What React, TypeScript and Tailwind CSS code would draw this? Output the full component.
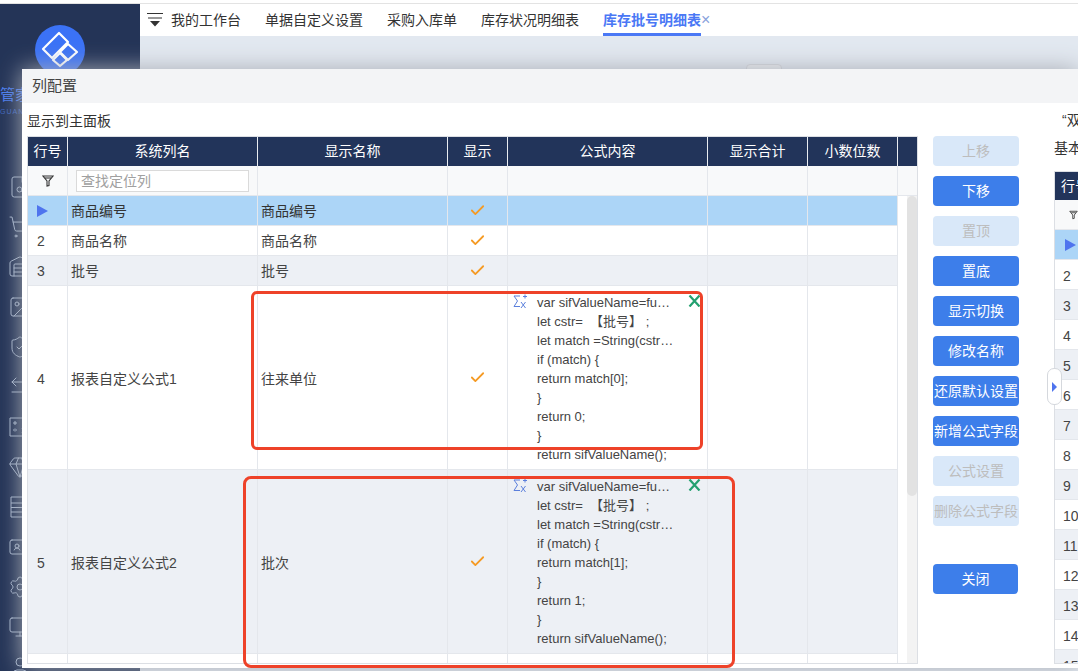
import { ArrowLeftRight, Check, FileSearch, Gem, IdCard, Image, Monitor, Settings, ShieldCheck, ShoppingCart, User, Warehouse } from 'lucide-react'

const FONT = 'font-["Liberation_Sans","Noto_Sans_CJK_SC",sans-serif]'

const TABS = ['单据自定义设置', '采购入库单', '库存状况明细表']
const COLUMNS = ['行号', '系统列名', '显示名称', '显示', '公式内容', '显示合计', '小数位数', '']
const GRID = 'grid grid-cols-[40px_190px_190px_60px_200px_100px_90px]'
const BUTTONS = [
  { label: '上移', off: true },
  { label: '下移' },
  { label: '置顶', off: true },
  { label: '置底' },
  { label: '显示切换' },
  { label: '修改名称' },
  { label: '还原默认设置' },
  { label: '新增公式字段' },
  { label: '公式设置', off: true },
  { label: '删除公式字段', off: true },
]

function CalcIcon() {
  return (
    <svg width="24" height="24" viewBox="0 0 24 24" fill="none" stroke="currentColor" strokeWidth="1">
      <path d="M2 3h20v18H2z" />
      <path d="M5 8h4M7 6v4M14 8h5M5 15h4M7 13v.5M7 16.500v.5M14 13.500l4 4M18 13.500l-4 4" />
    </svg>
  )
}

function ListIcon() {
  return (
    <svg width="24" height="24" viewBox="0 0 24 24" fill="none" stroke="currentColor" strokeWidth="1">
      <path d="M3 2h18v20H3z" />
      <path d="M3 8h18M3 12.500h18M3 17h18" />
    </svg>
  )
}

const SIDE_ICONS = [FileSearch, ShoppingCart, Warehouse, Image, ShieldCheck, ArrowLeftRight, CalcIcon, Gem, ListIcon, IdCard, Settings, Monitor, User]

// the cell shows these lines as the reference cuts them
function formula(n: number) {
  return [
    'var sifValueName=fu…',
    'let cstr=\u00a0\u00a0【批号】\u00a0;',
    'let match =String(cstr…',
    'if (match) {',
    `return match[${n}];`,
    '}',
    `return ${n};`,
    '}',
    'return sifValueName();',
  ]
}

function Arrow() {
  return <div className="h-0 w-0 border-y-[6px] border-l-[11px] border-y-transparent border-l-[#4f74ee]" />
}

function Funnel() {
  return (
    <svg width="12" height="12" viewBox="0 0 12 12" fill="none" stroke="#333" strokeWidth="1.1">
      <path d="M1 1h10L7 6v4.500L5 11V6z" />
      <path d="M3 3h6" />
    </svg>
  )
}

function Sigma() {
  return (
    <svg width="15" height="15" viewBox="0 0 15 15" fill="none" stroke="#5b7fdc" strokeWidth="1">
      <path d="M7 2H1l3.500 5L1 12.500h6" />
      <path d="M8 8l4.500 6M12.500 8L8 14" />
      <path d="M12 0.500v4M10 2.500h4" />
    </svg>
  )
}

function ExcelX() {
  return (
    <svg width="13" height="12" viewBox="0 0 13 12" fill="none" stroke="#23a06f" strokeWidth="2.2">
      <path d="M1.500 .5l10 11M11.500 .5l-10 11" />
    </svg>
  )
}

function Row({ no, name, label, shown, lines, tall, className }: { no: string; name: string; label: string; shown?: boolean; lines?: string[]; tall?: boolean; className: string }) {
  const text = tall ? 'pt-[4px]' : 'pt-[2px]'
  return (
    <div className={`${GRID} border-b border-[#e4e7ec] ${className}`}>
      <div className={`flex items-center border-r border-[#e4e7ec] pl-[9px] ${no === '1' ? '' : text}`}>{no === '1' ? <Arrow /> : no}</div>
      <div className={`flex items-center border-r border-[#e4e7ec] pl-[3px] ${text}`}>{name}</div>
      <div className={`flex items-center border-r border-[#e4e7ec] pl-[3px] ${text}`}>{label}</div>
      <div className="flex items-center justify-center border-r border-[#e4e7ec]">
        {shown && <Check size={17} strokeWidth={2.5} className="mr-[1px] text-[#f59a23]" />}
      </div>
      <div className="relative border-r border-[#e4e7ec]">
        {lines && (
          <div className="pl-[29px] pt-[7px] text-[13px] leading-[19px]">
            <div className="absolute left-[5px] top-[8px]">
              <Sigma />
            </div>
            <div className="absolute left-[180px] top-[9px]">
              <ExcelX />
            </div>
            {lines.map((line, i) => (
              <div key={i} className="whitespace-nowrap">{line}</div>
            ))}
          </div>
        )}
      </div>
      <div className="border-r border-[#e4e7ec]" />
      <div className="border-r border-[#e4e7ec]" />
    </div>
  )
}

export default function App() {
  return (
    <div className={`${FONT} relative flex h-[671px] w-[1078px] flex-col overflow-hidden bg-white text-[14px] text-[#444]`}>
      <div className="h-[4px] shrink-0 border-b border-[#e3e3e3] bg-white" />
      <div className="flex min-h-0 flex-1">
        {/* sidebar */}
        <div className="flex w-[140px] shrink-0 flex-col overflow-hidden bg-[#243457]">
          <div className="ml-[35px] mt-[21px] h-[50px] w-[50px] shrink-0 rounded-full bg-[#3b72f6]">
            <svg width="50" height="50" viewBox="0 0 50 50" fill="none" stroke="white" strokeWidth="2.2" strokeLinejoin="round">
              <path d="M24 8L8 24l9 9 16-16z" />
              <path d="M33 19l9 8-9 8-8-8z" />
              <path d="M25 28l7 7-7 6-7-6z" />
            </svg>
          </div>
          <div className="mt-[11px] shrink-0 text-[15px] leading-[18px] text-[#4a7df0]">管家</div>
          <div className="shrink-0 text-[7px] leading-[16px] tracking-[1px] text-[#3f66c0]">GUAN</div>
          <div className="mt-[47px] flex flex-col">
            {SIDE_ICONS.map((Icon, i) => (
              <div key={i} className="flex h-10 shrink-0 items-center pl-[8px] text-[#a5b4cc]">
                <Icon size={24} strokeWidth={1} />
              </div>
            ))}
          </div>
        </div>

        <div className="flex min-w-0 flex-1 flex-col bg-[#e2e8f0]">
          {/* tabs */}
          <div className="flex h-[32px] shrink-0 items-center gap-6 bg-white pl-[7px] text-[#333]">
            <div className="flex items-center gap-2">
              <svg width="16" height="14" viewBox="0 0 16 14" fill="#333">
                <path d="M0 0h16v1H0zM1 4.500h14v1H1zM3 8h10l-5 5.500z" />
              </svg>
              <span>我的工作台</span>
            </div>
            {TABS.map((tab) => (
              <span key={tab}>{tab}</span>
            ))}
            <div className="relative flex h-full items-center text-[#4a78f5]">
              <span className="font-bold">库存批号明细表</span>
              <span className="absolute bottom-0 left-0 h-[3px] w-[98px] bg-[#4a78f5]" />
              <span className="text-[16px] leading-none text-[#8aa2dc]">×</span>
            </div>
          </div>
        </div>
      </div>

      {/* small tab behind the dialog */}
      <div className="absolute left-[746px] top-[64px] h-[8px] w-[36px] rounded-t-[4px] border border-[#d2d5da] bg-[#eceef1]" />

      {/* dialog */}
      <div className="absolute bottom-[3px] left-[22px] right-0 top-[69px] flex flex-col bg-white shadow-[0_0_22px_#a9adb5]">
        <div className="flex h-[34px] shrink-0 items-center bg-[#f3f4f6] pl-[10px] text-[15px] text-[#444]">列配置</div>
        <div className="flex min-h-0 flex-1 pl-[5px]">
          <div className="flex w-[891px] shrink-0 flex-col">
            <div className="h-[33px] shrink-0 pt-[8px] leading-[20px] text-[#333]">显示到主面板</div>
            <div className="mb-[4px] min-h-0 flex-1 overflow-hidden border border-[#dcdfe4]">
              <div className="grid h-[29px] grid-cols-[40px_190px_190px_60px_200px_100px_90px_19px] bg-[#22345a] text-white">
                {COLUMNS.map((col, i) => (
                  <div key={i} className="flex items-center justify-center border-r border-[#e9ecf1] last:border-r-0">{col}</div>
                ))}
              </div>
              <div className="grid h-[30px] grid-cols-[40px_190px_190px_60px_200px_100px_90px_19px] border-b border-[#e4e7ec] bg-[#f8f9fa]">
                <div className="flex items-center justify-center border-r border-[#e4e7ec]">
                  <Funnel />
                </div>
                <div className="flex items-center border-r border-[#e4e7ec] pl-[8px]">
                  <div className="flex h-[22px] w-[173px] items-center border border-[#dadada] bg-white pl-[4px] pt-[1px] text-[#a0a0a0]">查找定位列</div>
                </div>
                {[0, 1, 2, 3, 4].map((i) => (
                  <div key={i} className="border-r border-[#e4e7ec]" />
                ))}
                <div />
              </div>
              <div className="flex">
                <div className="w-[870px] shrink-0">
                  <Row no="1" name="商品编号" label="商品编号" shown className="h-[30px] bg-[#acd5f7] text-[#333]" />
                  <Row no="2" name="商品名称" label="商品名称" shown className="h-[30px] bg-white" />
                  <Row no="3" name="批号" label="批号" shown className="h-[30px] bg-[#edf0f5]" />
                  <Row no="4" name="报表自定义公式1" label="往来单位" shown tall lines={formula(0)} className="h-[184px] bg-white" />
                  <Row no="5" name="报表自定义公式2" label="批次" shown tall lines={formula(1)} className="h-[184px] bg-[#edf0f5]" />
                  <Row no="" name="" label="" className="h-[30px] bg-white" />
                </div>
                <div className="h-[467px] w-[20px] pl-[9px]">
                  <div className="h-full w-[11px] bg-[#f3f3f3]">
                    <div className="h-[300px] w-[10px] rounded-full bg-[#e2e2e2]" />
                  </div>
                </div>
              </div>
            </div>
          </div>

          {/* actions */}
          <div className="ml-[15px] flex w-[86px] shrink-0 flex-col pt-[33px]">
            {BUTTONS.map((b) => (
              <div key={b.label} className={`mb-[10px] flex h-[30px] items-center justify-center whitespace-nowrap rounded-[4px] pt-[1px] ${b.off ? 'bg-[#d9e8f9] text-[#bdbdbd]' : 'bg-[#3d7eea] text-white'}`}>
                {b.label}
              </div>
            ))}
            <div className="mt-[28px] flex h-[30px] w-[85px] items-center justify-center rounded-[4px] bg-[#3d7eea] text-white">关闭</div>
          </div>

          {/* second panel, cut off by the window */}
          <div className="ml-[35px] flex min-w-0 flex-1 flex-col overflow-hidden">
            <div className="h-[29px] shrink-0 whitespace-nowrap pl-[8px] pt-[7px] leading-[20px] text-[#333]">“双</div>
            <div className="h-[39px] shrink-0 whitespace-nowrap pt-[6px] leading-[20px] text-[#333]">基本</div>
            <div className="mb-[4px] min-h-0 flex-1 overflow-hidden border-b border-l border-t border-[#dcdfe4]">
              <div className="flex h-[28px] items-center whitespace-nowrap bg-[#22345a] pl-[6px] text-white">行号</div>
              <div className="flex h-[30px] items-center border-b border-[#e4e7ec] bg-[#f8f9fa] pl-[14px]">
                <Funnel />
              </div>
              <div className="flex h-[30px] items-center border-b border-[#e4e7ec] bg-[#acd5f7] pl-[10px]">
                <Arrow />
              </div>
              {['2', '3', '4', '5', '6', '7', '8', '9', '10', '11', '12', '13', '14', '15'].map((no, i) => (
                <div key={no} className={`flex h-[30px] items-center border-b border-[#e4e7ec] pl-[8px] pt-[3px] ${i % 2 ? 'bg-[#edf0f5]' : 'bg-white'}`}>
                  {no}
                </div>
              ))}
            </div>
          </div>
        </div>

        {/* collapse handle */}
        <div className="absolute left-[1025px] top-[299px] flex h-[37px] w-[15px] items-center justify-center rounded-[7px] border border-[#d5d8dd] bg-white">
          <div className="h-0 w-0 border-y-[5px] border-l-[5px] border-y-transparent border-l-[#4f74ee]" />
        </div>
      </div>

      {/* red marks drawn on the screenshot */}
      <div className="absolute left-[251px] top-[291px] h-[159px] w-[452px] rounded-[6px] border-[3px] border-[#ee4229]" />
      <div className="absolute left-[243px] top-[476px] h-[192px] w-[492px] rounded-[8px] border-[3px] border-[#ee4229]" />
    </div>
  )
}
